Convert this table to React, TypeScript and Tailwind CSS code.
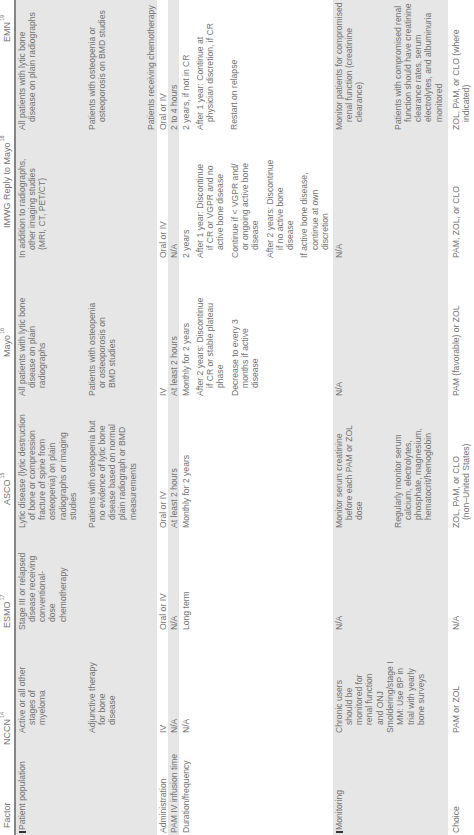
import type { ReactNode } from 'react'

// Table is laid out normally (835 wide x 474 tall) and then turned a quarter
// turn counter-clockwise, like the scanned page.
const COLS = 'grid grid-cols-[100px_103px_102px_132px_138px_128px_132px] text-[8.6px]'

function P({ lines, className = '' }: { lines: string[]; className?: string }) {
  return (
    <div className={className}>
      {lines.map((l, i) => (
        <span key={i} className={i === 0 ? 'block whitespace-nowrap' : 'block whitespace-nowrap pl-[8px]'}>
          {l}
        </span>
      ))}
    </div>
  )
}

function Cell({ children, className = '' }: { children?: ReactNode; className?: string }) {
  return <div className={`pl-[2px] pt-[1px] ${className}`}>{children}</div>
}

function Sup({ n }: { n: number }) {
  return <sup className="text-[5.5px] leading-none align-[3px] pl-[1px]">{n}</sup>
}

export default function App() {
  return (
    <div className="relative w-[474px] h-[835px] overflow-hidden bg-white">
      <div
        className="absolute left-0 top-0 w-[835px] h-[474px] origin-top-left translate-y-[835px] -rotate-90 text-[9px] leading-[10.3px] text-[#737373]"
        style={{ fontFamily: '"Liberation Sans", Arial, sans-serif' }}
      >
        {/* header */}
        <div className="grid grid-cols-[7px_83px_117px_123px_148px_129px_186px_42px] h-[14px] items-center">
          <span />
          <span>Factor</span>
          <span>NCCN<Sup n={14} /></span>
          <span>ESMO<Sup n={17} /></span>
          <span>ASCO<Sup n={15} /></span>
          <span>Mayo<Sup n={16} /></span>
          <span>IMWG Reply to Mayo<Sup n={18} /></span>
          <span>EMN<Sup n={19} /></span>
        </div>
        <div className="h-[1.5px] bg-[#858585]" />

        {/* patient population */}
        <div className={`${COLS} grid-rows-[70px_59px_12px] bg-[#e6e6e6]`}>
          <Cell className="row-span-3">
            <span className="inline-block w-[2px] h-[7px] bg-[#333] align-[-1px] mr-[1px]" />Patient population
          </Cell>
          <Cell><P lines={['Active or all other', 'stages of', 'myeloma']} /></Cell>
          <Cell className="row-span-3">
            <P lines={['Stage III or relapsed', 'disease receiving', 'conventional-', 'dose', 'chemotherapy']} />
          </Cell>
          <Cell>
            <P lines={['Lytic disease (lytic destruction', 'of bone or compression', 'fracture of spine from', 'osteopenia) on plain', 'radiographs or imaging', 'studies']} />
          </Cell>
          <Cell><P lines={['All patients with lytic bone', 'disease on plain', 'radiographs']} /></Cell>
          <Cell className="row-span-3">
            <P lines={['In addition to radiographs,', 'other imaging studies', '(MRI, CT, PET/CT)']} />
          </Cell>
          <Cell><P lines={['All patients with lytic bone', 'disease on plain radiographs']} /></Cell>

          <Cell className="row-span-2"><P lines={['Adjunctive therapy', 'for bone', 'disease']} /></Cell>
          <Cell className="row-span-2">
            <P lines={['Patients with osteopenia but', 'no evidence of lytic bone', 'disease based on normal', 'plain radiograph or BMD', 'measurements']} />
          </Cell>
          <Cell className="row-span-2"><P lines={['Patients with osteopenia', 'or osteoporosis on', 'BMD studies']} /></Cell>
          <Cell><P lines={['Patients with osteopenia or', 'osteoporosis on BMD studies']} /></Cell>

          <Cell className="pt-0"><P lines={['Patients receiving chemotherapy']} /></Cell>
        </div>

        {/* administration */}
        <div className={`${COLS} h-[11px]`}>
          <Cell className="pt-0">Administration</Cell>
          <Cell className="pt-0">IV</Cell>
          <Cell className="pt-0">Oral or IV</Cell>
          <Cell className="pt-0">Oral or IV</Cell>
          <Cell className="pt-0">IV</Cell>
          <Cell className="pt-0">Oral or IV</Cell>
          <Cell className="pt-0">Oral or IV</Cell>
        </div>

        {/* PAM infusion */}
        <div className={`${COLS} h-[11px] bg-[#e6e6e6]`}>
          <Cell className="pt-0">PAM IV infusion time</Cell>
          <Cell className="pt-0">N/A</Cell>
          <Cell className="pt-0">N/A</Cell>
          <Cell className="pt-0">At least 2 hours</Cell>
          <Cell className="pt-0">At least 2 hours</Cell>
          <Cell className="pt-0">N/A</Cell>
          <Cell className="pt-0">2 to 4 hours</Cell>
        </div>

        {/* duration */}
        <div className={`${COLS} h-[154px]`}>
          <Cell className="pt-[2px]">Duration/frequency</Cell>
          <Cell className="pt-[2px]">N/A</Cell>
          <Cell className="pt-[2px]">Long term</Cell>
          <Cell className="pt-[2px]">Monthly for 2 years</Cell>
          <Cell className="pt-[2px] flex flex-col gap-[4px]">
            <P lines={['Monthly for 2 years']} />
            <P lines={['After 2 years: Discontinue', 'if CR or stable plateau', 'phase']} />
            <P lines={['Decrease to every 3', 'months if active', 'disease']} />
          </Cell>
          <Cell className="pt-[2px] flex flex-col gap-[4px]">
            <P lines={['2 years']} />
            <P lines={['After 1 year: Discontinue', 'if CR or VGPR and no', 'active bone disease']} />
            <P lines={['Continue if < VGPR and/', 'or ongoing active bone', 'disease']} />
            <P lines={['After 2 years: Discontinue', 'if no active bone', 'disease']} />
            <P lines={['If active bone disease,', 'continue at own', 'discretion']} />
          </Cell>
          <Cell className="pt-[2px] flex flex-col gap-[4px]">
            <P lines={['2 years, if not in CR']} />
            <P lines={['After 1 year: Continue at', 'physician discretion, if CR']} />
            <P className="mt-[10px]" lines={['Restart on relapse']} />
          </Cell>
        </div>

        {/* monitoring */}
        <div className={`${COLS} grid-rows-[59px_56px] bg-[#e6e6e6]`}>
          <Cell className="row-span-2">
            <span className="inline-block w-[2px] h-[7px] bg-[#333] align-[-1px] mr-[1px]" />Monitoring
          </Cell>
          <Cell className="row-span-2">
            <P lines={['Chronic users', 'should be', 'monitored for', 'renal function', 'and ONJ']} />
            <P lines={['Smoldering/stage I', 'MM: Use BP in', 'trial with yearly', 'bone surveys']} />
          </Cell>
          <Cell className="row-span-2">N/A</Cell>
          <Cell><P lines={['Monitor serum creatinine', 'before each PAM or ZOL', 'dose']} /></Cell>
          <Cell className="row-span-2">N/A</Cell>
          <Cell className="row-span-2">N/A</Cell>
          <Cell><P lines={['Monitor patients for compromised', 'renal function (creatinine', 'clearance)']} /></Cell>
          <Cell><P lines={['Regularly monitor serum', 'calcium, electrolytes,', 'phosphate, magnesium,', 'hematocrit/hemoglobin']} /></Cell>
          <Cell>
            <P lines={['Patients with compromised renal', 'function should have creatinine', 'clearance rates, serum', 'electrolytes, and albuminuria', 'monitored']} />
          </Cell>
        </div>

        {/* choice */}
        <div className={`${COLS} h-[26px]`}>
          <Cell className="pt-[3px]">Choice</Cell>
          <Cell className="pt-[3px]">PAM or ZOL</Cell>
          <Cell className="pt-[3px]">N/A</Cell>
          <Cell className="pt-[3px]"><P lines={['ZOL, PAM, or CLO', '(non–United States)']} /></Cell>
          <Cell className="pt-[3px]">PAM (favorable) or ZOL</Cell>
          <Cell className="pt-[3px]">PAM, ZOL, or CLO</Cell>
          <Cell className="pt-[3px]"><P lines={['ZOL, PAM, or CLO (where', 'indicated)']} /></Cell>
        </div>
      </div>
    </div>
  )
}
